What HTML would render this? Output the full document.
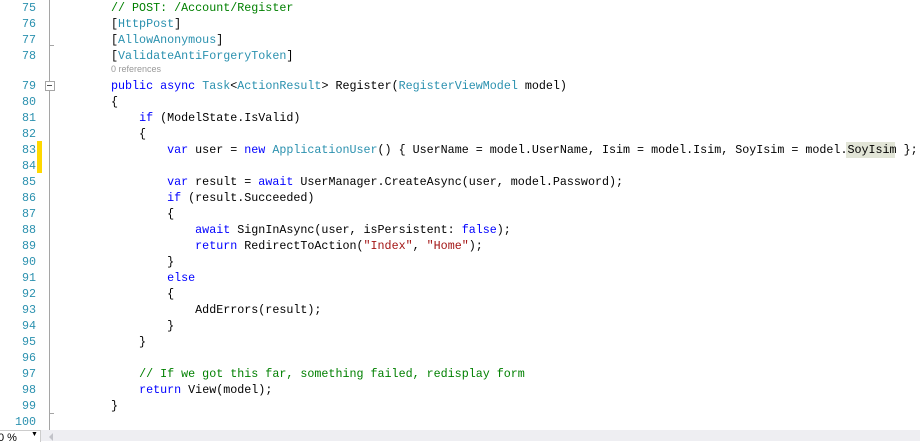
<!DOCTYPE html>
<html><head><style>
body{margin:0;width:920px;height:441px;background:#fff;overflow:hidden;position:relative;font-family:"Liberation Mono",monospace;}
.ln{position:absolute;left:0;width:36px;text-align:right;color:#2b91af;font-size:11.7px;line-height:16px;}
.c{position:absolute;left:111px;white-space:pre;font-size:11.7px;line-height:16px;color:#000;}
.k{color:#0000ff}.t{color:#2b91af}.g{color:#008000}.s{color:#a31515}
.ref{position:absolute;left:111px;top:64px;font-family:"Liberation Sans",sans-serif;font-size:9px;color:#999;}
</style></head><body>
<div style="position:absolute;left:49px;top:0;width:1px;height:430px;background:#a5a5a5"></div>
<div style="position:absolute;left:49px;top:45px;width:5px;height:1px;background:#a5a5a5"></div>
<div style="position:absolute;left:49px;top:413px;width:5px;height:1px;background:#a5a5a5"></div>
<div style="position:absolute;left:45px;top:81px;width:8px;height:8px;border:1px solid #a5a5a5;background:#fff"></div>
<div style="position:absolute;left:47px;top:85px;width:5px;height:1px;background:#555"></div>
<div style="position:absolute;left:37px;top:141px;width:5px;height:32px;background:#ffd800"></div>
<div style="position:absolute;left:846px;top:142px;width:49px;height:16px;background:#e2e5d7"></div>
<div id="L"></div>
<div class="ref">0 references</div>
<div style="position:absolute;left:0;top:430px;width:920px;height:11px;background:#eeeef2"></div>
<div style="position:absolute;left:0;top:430px;width:40px;height:11px;background:#fff;border-right:1px solid #ccc;border-top:1px solid #ccc;font-family:'Liberation Sans',sans-serif;font-size:11px;line-height:18px;overflow:hidden"><span style="position:absolute;left:-2px;top:-2px">0 %</span><span style="position:absolute;left:31px;top:-5px;font-size:7px">▼</span></div>
<div style="position:absolute;left:49px;top:433px;width:0;height:0;border-right:4px solid #c2c3c9;border-top:4px solid transparent;border-bottom:4px solid transparent"></div>
<script>
var rows=[
[75,0,'<span class="g">// POST: /Account/Register</span>'],
[76,16,'[<span class="t">HttpPost</span>]'],
[77,32,'[<span class="t">AllowAnonymous</span>]'],
[78,48,'[<span class="t">ValidateAntiForgeryToken</span>]'],
[79,78,'<span class="k">public</span> <span class="k">async</span> <span class="t">Task</span>&lt;<span class="t">ActionResult</span>&gt; Register(<span class="t">RegisterViewModel</span> model)'],
[80,94,'{'],
[81,110,'    <span class="k">if</span> (ModelState.IsValid)'],
[82,126,'    {'],
[83,142,'        <span class="k">var</span> user = <span class="k">new</span> <span class="t">ApplicationUser</span>() { UserName = model.UserName, Isim = model.Isim, SoyIsim = model.SoyIsim };'],
[84,158,''],
[85,174,'        <span class="k">var</span> result = <span class="k">await</span> UserManager.CreateAsync(user, model.Password);'],
[86,190,'        <span class="k">if</span> (result.Succeeded)'],
[87,206,'        {'],
[88,222,'            <span class="k">await</span> SignInAsync(user, isPersistent: <span class="k">false</span>);'],
[89,238,'            <span class="k">return</span> RedirectToAction(<span class="s">"Index"</span>, <span class="s">"Home"</span>);'],
[90,254,'        }'],
[91,270,'        <span class="k">else</span>'],
[92,286,'        {'],
[93,302,'            AddErrors(result);'],
[94,318,'        }'],
[95,334,'    }'],
[96,350,''],
[97,366,'    <span class="g">// If we got this far, something failed, redisplay form</span>'],
[98,382,'    <span class="k">return</span> View(model);'],
[99,398,'}'],
[100,414,'']];
var h='';rows.forEach(function(r){h+='<div class="ln" style="top:'+r[1]+'px">'+r[0]+'</div><div class="c" style="top:'+r[1]+'px">'+r[2]+'</div>';});
document.getElementById('L').innerHTML=h;
</script>
</body></html>
